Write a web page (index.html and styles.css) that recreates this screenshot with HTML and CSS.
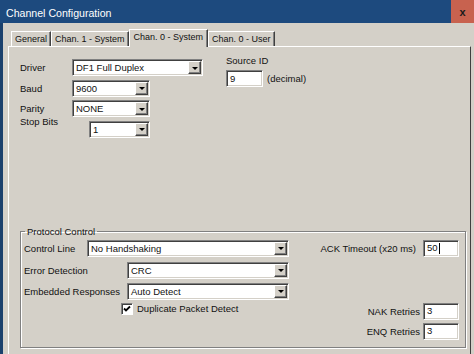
FILE: index.html
```html
<!DOCTYPE html>
<html lang="en">
<head>
    <meta charset="UTF-8">
    <title>Channel Configuration</title>
    <link rel="stylesheet" href="styles.css">
</head>
<body>

<div class="window">
    <div class="titlebar">
        <span class="title">Channel Configuration</span>
        <span class="close">x</span>
    </div>

    <div class="client">
        <div class="tabs">
            <div class="tab">General</div>
            <div class="tab">Chan. 1 - System</div>
            <div class="tab active">Chan. 0 - System</div>
            <div class="tab">Chan. 0 - User</div>
        </div>

        <div class="panel">
            <div class="top">
                <div class="port-grid">
                    <span class="label">Driver</span>
                    <div class="combo driver"><span class="value">DF1 Full Duplex</span><span class="drop"></span></div>
                    <span class="label">Baud</span>
                    <div class="combo short"><span class="value">9600</span><span class="drop"></span></div>
                    <span class="label">Parity</span>
                    <div class="combo short"><span class="value">NONE</span><span class="drop"></span></div>
                    <span class="label stop-label">Stop Bits</span>
                    <div class="combo stop"><span class="value">1</span><span class="drop"></span></div>
                </div>

                <div class="source">
                    <div class="label">Source ID</div>
                    <div class="source-row">
                        <div class="edit source-edit">9</div>
                        <span class="label">(decimal)</span>
                    </div>
                </div>
            </div>

            <fieldset class="group">
                <legend>Protocol Control</legend>
                <div class="group-left">
                    <div class="row">
                        <span class="label cl-label">Control Line</span>
                        <div class="combo grow"><span class="value">No Handshaking</span><span class="drop"></span></div>
                    </div>
                    <div class="row row-err">
                        <span class="label wide-label">Error Detection</span>
                        <div class="combo grow"><span class="value">CRC</span><span class="drop"></span></div>
                    </div>
                    <div class="row row-emb">
                        <span class="label wide-label">Embedded Responses</span>
                        <div class="combo grow"><span class="value">Auto Detect</span><span class="drop"></span></div>
                    </div>
                    <div class="check-row">
                        <span class="checkbox">
                            <svg width="8" height="8" viewBox="0 0 8 8"><path d="M1 3.5 L3 5.5 L7 1.5" fill="none" stroke="#000" stroke-width="1.8"/></svg>
                        </span>
                        <span class="label">Duplicate Packet Detect</span>
                    </div>
                </div>

                <div class="group-right">
                    <div class="pair">
                        <span class="label">ACK Timeout (x20 ms)</span>
                        <div class="edit small-edit">50<span class="caret"></span></div>
                    </div>
                    <div class="pair nak">
                        <span class="label">NAK Retries</span>
                        <div class="edit small-edit">3</div>
                    </div>
                    <div class="pair enq">
                        <span class="label">ENQ Retries</span>
                        <div class="edit small-edit">3</div>
                    </div>
                </div>
            </fieldset>
        </div>
    </div>
</div>

</body>
</html>
```

FILE: styles.css
```css
body { margin: 0; padding: 0; font-family: "Liberation Sans", Arial, sans-serif; color: #111; background: #d4d0c8; overflow: hidden; }
.window { width: 474px; height: 354px; display: flex; flex-direction: column; background: #d4d0c8; }

.titlebar { height: 23px; flex-shrink: 0; display: flex; align-items: center; justify-content: space-between; background: #1d4a7e; }
.title { color: #fff; font-size: 10.6px; padding-left: 6px; padding-top: 3px; }
.close { width: 23px; height: 23px; background: #c8624f; color: #1a1a1a; font-weight: bold; font-size: 11px; display: flex; align-items: center; justify-content: center; }

.client { flex-grow: 1; display: flex; flex-direction: column; border-left: 3px solid #1b416d; padding: 6px 3px 0 5px; }

.tabs { display: flex; align-items: flex-end; height: 17px; padding-left: 3px; position: relative; z-index: 1; }
.tab { font-size: 9px; height: 15px; line-height: 14px; padding: 0 3px; border-top: 1px solid #fff; border-left: 1px solid #fff; border-right: 1px solid #404040; box-shadow: inset -1px 0 #808080; box-sizing: border-box; white-space: nowrap; }
.tab.active { height: 18px; margin-bottom: -1px; line-height: 15px; padding: 0 4px; background: #d4d0c8; }

.panel { flex-grow: 1; border-top: 1px solid #fff; border-left: 1px solid #fff; border-right: 1px solid #404040; padding: 12px 4px 0 11px; }

.label { font-size: 9.5px; white-space: nowrap; }

.top { display: flex; }
.port-grid { display: grid; grid-template-columns: 52px auto; grid-auto-rows: 17px; row-gap: 3.67px; align-items: center; }
.stop-label { align-self: start; margin-top: -5px; }

.combo { height: 17px; box-sizing: border-box; display: flex; align-items: center; background: #fff; border: 1px solid; border-color: #808080 #fff #fff #808080; box-shadow: inset 1px 1px 0 #404040, inset -1px -1px 0 #d4d0c8; padding: 1px; }
.combo .value { flex-grow: 1; font-size: 9.5px; padding-left: 2px; white-space: nowrap; }
.drop { width: 13px; height: 13px; box-sizing: border-box; flex-shrink: 0; background: #d4d0c8; border: 1px solid; border-color: #fff #404040 #404040 #fff; box-shadow: inset -1px -1px 0 #808080; display: flex; align-items: center; justify-content: center; }
.drop::after { content: ""; border-left: 3px solid transparent; border-right: 3px solid transparent; border-top: 3px solid #000; margin-top: 1px; }
.driver { width: 131px; }
.short { width: 78px; }
.stop { width: 61px; margin-left: 17px; }

.source { margin-left: 23px; margin-top: -4px; }
.source .label { line-height: 12px; }
.source-row { display: flex; align-items: center; gap: 4px; margin-top: 3px; }

.edit { height: 17px; box-sizing: border-box; background: #fff; border: 1px solid; border-color: #808080 #fff #fff #808080; box-shadow: inset 1px 1px 0 #404040, inset -1px -1px 0 #d4d0c8; font-size: 9.5px; line-height: 14px; padding-left: 3px; display: flex; align-items: center; }
.source-edit { width: 37px; }
.small-edit { width: 36px; }
.caret { width: 1px; height: 11px; background: #000; margin-left: 1px; }

.group { margin: 88px 0 0 0; border: 1px solid #808080; box-shadow: inset 1px 1px 0 #fff, 1px 1px 0 #fff; padding: 2px 6px 7px 3px; display: flex; }
.group legend { font-size: 9.5px; line-height: 12px; padding: 0 2px; margin-left: 1px; }

.group-left { width: 265px; }
.row { display: flex; align-items: center; }
.cl-label { width: 63px; }
.wide-label { width: 103px; }
.combo.grow { flex-grow: 1; }
.row-err { margin-top: 5px; }
.row-emb { margin-top: 4px; }
.check-row { display: flex; align-items: center; gap: 4px; margin-top: 3px; padding-left: 97px; }
.checkbox { width: 12px; height: 12px; box-sizing: border-box; background: #fff; border: 1px solid; border-color: #808080 #fff #fff #808080; box-shadow: inset 1px 1px 0 #404040; display: flex; align-items: center; justify-content: center; }

.group-right { flex-grow: 1; display: flex; flex-direction: column; align-items: flex-end; }
.pair { display: flex; align-items: center; gap: 7px; }
.pair.nak { margin-top: 46px; gap: 3px; }
.pair.enq { margin-top: 3px; gap: 3px; }
```
